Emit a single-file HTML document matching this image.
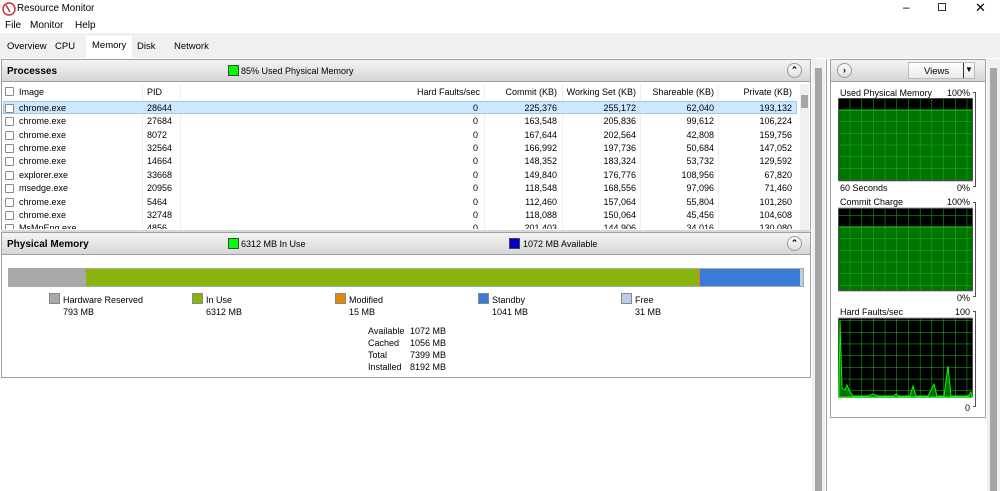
<!DOCTYPE html>
<html><head><style>
*{margin:0;padding:0;box-sizing:border-box}
body{width:1000px;height:491px;overflow:hidden;background:#fff;font-family:"Liberation Sans",sans-serif;font-size:9px;color:#000;position:relative}
.a{position:absolute;white-space:nowrap}
.r{text-align:right}
.hdr{position:absolute;background:linear-gradient(#f4f4f4,#d6d6d6);border:1px solid #a0a0a0;height:23px}
.hdr b{position:absolute;left:5px;top:6px;font-size:10px}
.cb{position:absolute;width:9px;height:9px;border:1px solid #8a8a8a;background:#fff;border-radius:1px}
.sq{position:absolute;width:11px;height:11px;border:1px solid #888}
.circ{position:absolute;width:15px;height:15px;border-radius:50%;border:1px solid #9a9a9a;background:linear-gradient(#fff,#ddd);font-size:9px;text-align:center;line-height:12px;font-weight:bold}
</style></head><body>
<svg class="a" style="left:2px;top:2px" width="14" height="14"><circle cx="7" cy="7" r="6" fill="#fff" stroke="#c33" stroke-width="1.5"/><line x1="4" y1="3" x2="8" y2="10" stroke="#c33" stroke-width="1.5"/></svg>
<div class="a" style="left:17px;top:3px;font-size:9.8px">Resource Monitor</div>
<div class="a" style="left:903px;top:0;font-size:12px">&#8211;</div>
<div class="a" style="left:938px;top:3px;width:8px;height:8px;border:1px solid #333"></div>
<div class="a" style="left:975px;top:0;font-size:13px">&#10005;</div>
<div class="a" style="left:5px;top:20px;font-size:10px">File</div>
<div class="a" style="left:30px;top:20px;font-size:10px">Monitor</div>
<div class="a" style="left:75px;top:20px;font-size:10px">Help</div>
<div class="a" style="left:0;top:33px;width:1000px;height:25px;background:#f0f0f0"></div>
<div class="a" style="left:86px;top:36px;width:46px;height:22px;background:#fff"></div>
<div class="a" style="left:7px;top:41px;font-size:9.5px">Overview</div>
<div class="a" style="left:55px;top:41px;font-size:9.5px">CPU</div>
<div class="a" style="left:92px;top:40px;font-size:9.5px">Memory</div>
<div class="a" style="left:137px;top:41px;font-size:9.5px">Disk</div>
<div class="a" style="left:174px;top:41px;font-size:9.5px">Network</div>
<div class="a" style="left:1px;top:59px;width:810px;height:319px;border:1px solid #a0a0a0"></div>
<div class="hdr" style="left:1px;top:59px;width:810px"><b>Processes</b></div>
<div class="sq" style="left:228px;top:65px;background:#0f0;border-color:#444"></div>
<div class="a" style="left:241px;top:66px">85% Used Physical Memory</div>
<div class="circ" style="left:787px;top:63px">&#8963;</div>
<div class="cb" style="left:5px;top:87px"></div>
<div class="a" style="left:19px;top:87px">Image</div>
<div class="a" style="left:147px;top:87px">PID</div>
<div class="a" style="left:142px;top:84px;width:1px;height:146px;background:#eee"></div>
<div class="a" style="left:180px;top:84px;width:1px;height:146px;background:#eee"></div>
<div class="a" style="left:484px;top:84px;width:1px;height:146px;background:#eee"></div>
<div class="a" style="left:562px;top:84px;width:1px;height:146px;background:#eee"></div>
<div class="a" style="left:640px;top:84px;width:1px;height:146px;background:#eee"></div>
<div class="a" style="left:718px;top:84px;width:1px;height:146px;background:#eee"></div>
<div class="a r" style="left:380px;width:100px;top:87px">Hard Faults/sec</div>
<div class="a r" style="left:457px;width:100px;top:87px">Commit (KB)</div>
<div class="a r" style="left:536px;width:100px;top:87px">Working Set (KB)</div>
<div class="a r" style="left:614px;width:100px;top:87px">Shareable (KB)</div>
<div class="a r" style="left:692px;width:100px;top:87px">Private (KB)</div>
<div class="a" style="left:3px;top:101px;width:794px;height:13px;background:#cce8ff;border:1px solid #99c9ef"></div>
<div class="a" style="left:800px;top:84px;width:9px;height:146px;background:#f0f0f0"></div>
<div class="a" style="left:801px;top:95px;width:7px;height:13px;background:#a6a6a6"></div>
<div id="rows"></div>
<div class="a" style="left:1px;top:230px;width:810px;height:2px;background:#d8d8d8"></div>
<div class="hdr" style="left:1px;top:232px;width:810px"><b>Physical Memory</b></div>
<div class="sq" style="left:228px;top:238px;background:#0f0;border-color:#444"></div>
<div class="a" style="left:241px;top:239px">6312 MB In Use</div>
<div class="sq" style="left:509px;top:238px;background:#00c;border-color:#444"></div>
<div class="a" style="left:523px;top:239px">1072 MB Available</div>
<div class="circ" style="left:787px;top:236px">&#8963;</div>
<div class="a" style="left:8px;top:268px;width:796px;height:19px;border:1px solid #aaa;display:flex">
<div style="width:77px;background:#a8a8a8"></div><div style="width:612px;background:#8ab40c"></div><div style="width:2px;background:#c78a2a"></div><div style="width:100px;background:#3a7bd5"></div><div style="flex:1;background:#b8cfe8"></div></div>
<div class="sq" style="left:49px;top:293px;background:#a8a8a8"></div><div class="a" style="left:63px;top:295px">Hardware Reserved</div><div class="a" style="left:63px;top:307px">793 MB</div>
<div class="sq" style="left:192px;top:293px;background:#8ab40c"></div><div class="a" style="left:206px;top:295px">In Use</div><div class="a" style="left:206px;top:307px">6312 MB</div>
<div class="sq" style="left:335px;top:293px;background:#e08a00"></div><div class="a" style="left:349px;top:295px">Modified</div><div class="a" style="left:349px;top:307px">15 MB</div>
<div class="sq" style="left:478px;top:293px;background:#3a7bd5"></div><div class="a" style="left:492px;top:295px">Standby</div><div class="a" style="left:492px;top:307px">1041 MB</div>
<div class="sq" style="left:621px;top:293px;background:#b8cfe8"></div><div class="a" style="left:635px;top:295px">Free</div><div class="a" style="left:635px;top:307px">31 MB</div>
<div class="a" style="left:368px;top:325px;line-height:12px">Available<br>Cached<br>Total<br>Installed</div>
<div class="a" style="left:410px;top:325px;line-height:12px">1072 MB<br>1056 MB<br>7399 MB<br>8192 MB</div>
<div class="a" style="left:812px;top:59px;width:13px;height:432px;background:#f0f0f0"></div>
<div class="a" style="left:815px;top:68px;width:7px;height:423px;background:#a6a6a6"></div>
<div class="a" style="left:987px;top:59px;width:13px;height:432px;background:#f0f0f0"></div>
<div class="a" style="left:990px;top:68px;width:7px;height:423px;background:#a6a6a6"></div>
<div class="a" style="left:826px;top:59px;width:161px;height:432px;border-left:1px solid #a0a0a0"></div>
<div class="a" style="left:830px;top:59px;width:156px;height:359px;border:1px solid #a0a0a0"></div>
<div class="hdr" style="left:830px;top:59px;width:156px"></div>
<div class="circ" style="left:837px;top:63px">&#8250;</div>
<div class="a" style="left:908px;top:62px;width:67px;height:17px;background:linear-gradient(#fff,#eaeaea);border:1px solid #bbb"></div>
<div class="a" style="left:924px;top:66px;font-size:9.5px">Views</div>
<div class="a" style="left:963px;top:63px;width:1px;height:15px;background:#333"></div>
<div class="a" style="left:965px;top:65px;font-size:8px">&#9660;</div>
<div class="a" style="left:840px;top:88px">Used Physical Memory</div><div class="a r" style="left:930px;width:40px;top:88px">100%</div>
<div class="a" style="left:840px;top:183px">60 Seconds</div><div class="a r" style="left:930px;width:40px;top:183px">0%</div>
<div class="a" style="left:840px;top:197px">Commit Charge</div><div class="a r" style="left:930px;width:40px;top:197px">100%</div>
<div class="a r" style="left:930px;width:40px;top:293px">0%</div>
<div class="a" style="left:840px;top:307px">Hard Faults/sec</div><div class="a r" style="left:930px;width:40px;top:307px">100</div>
<div class="a r" style="left:930px;width:40px;top:403px">0</div>
<div class="a" style="left:973px;top:92px;width:3px;height:95px;border:1px solid #555;border-left:none"></div>
<div class="a" style="left:973px;top:202px;width:3px;height:95px;border:1px solid #555;border-left:none"></div>
<div class="a" style="left:973px;top:311px;width:3px;height:96px;border:1px solid #555;border-left:none"></div>
<svg class="a" style="left:838px;top:98px" width="135" height="300">
<defs><pattern id="g" width="11.7" height="11.7" patternUnits="userSpaceOnUse"><path d="M0 0H11.7M0 0V11.7" stroke="#19c019" stroke-width="1" fill="none"/></pattern></defs>
<rect x="0" y="0" width="135" height="83" fill="#000" stroke="#999"/>
<rect x="1" y="12" width="133" height="70" fill="#007400"/>
<line x1="1" y1="12" x2="134" y2="12" stroke="#0f0"/>
<rect x="1" y="1" width="133" height="81" fill="url(#g)"/>
<rect x="0" y="110" width="135" height="83" fill="#000" stroke="#999"/>
<rect x="1" y="129" width="133" height="63" fill="#007400"/>
<line x1="1" y1="129" x2="134" y2="129" stroke="#0f0"/>
<rect x="1" y="111" width="133" height="81" fill="url(#g)"/>
<rect x="0" y="220" width="135" height="80" fill="#000" stroke="#999"/>
<rect x="1" y="221" width="133" height="78" fill="url(#g)"/>
<path d="M1 299 L2 222 L4 290 L7 292 L9 287 L12 294 L15 298 L30 298 L35 296 L40 298 L55 298 L58 296 L60 298 L72 298 L75 288 L78 298 L90 298 L96 286 L99 298 L106 298 L110 268 L113 298 L130 298 L133 294 L134 299 Z" fill="#007000" stroke="#0f0" stroke-width="1"/>
</svg>
<script>
var d=[["chrome.exe",28644,225376,255172,62040,193132],["chrome.exe",27684,163548,205836,99612,106224],["chrome.exe",8072,167644,202564,42808,159756],["chrome.exe",32564,166992,197736,50684,147052],["chrome.exe",14664,148352,183324,53732,129592],["explorer.exe",33668,149840,176776,108956,67820],["msedge.exe",20956,118548,168556,97096,71460],["chrome.exe",5464,112460,157064,55804,101260],["chrome.exe",32748,118088,150064,45456,104608],["MsMpEng.exe",4856,201403,144906,34016,130080]];
var h="",f=function(n){return n.toLocaleString("en-US")};
d.forEach(function(r,i){var t=102+i*13.37;
h+='<div class="a" style="top:'+t+'px;left:0;width:800px;height:'+(i==9?7:13)+'px;overflow:hidden">'+
'<div class="cb" style="left:5px;top:2px"></div><div class="a" style="left:19px;top:1px">'+r[0]+'</div><div class="a" style="left:147px;top:1px">'+r[1]+'</div>'+
'<div class="a r" style="left:380px;width:98px;top:1px">0</div><div class="a r" style="left:457px;width:100px;top:1px">'+f(r[2])+'</div><div class="a r" style="left:536px;width:100px;top:1px">'+f(r[3])+'</div><div class="a r" style="left:614px;width:100px;top:1px">'+f(r[4])+'</div><div class="a r" style="left:692px;width:100px;top:1px">'+f(r[5])+'</div></div>';});
document.getElementById("rows").innerHTML=h;
</script>
</body></html>
